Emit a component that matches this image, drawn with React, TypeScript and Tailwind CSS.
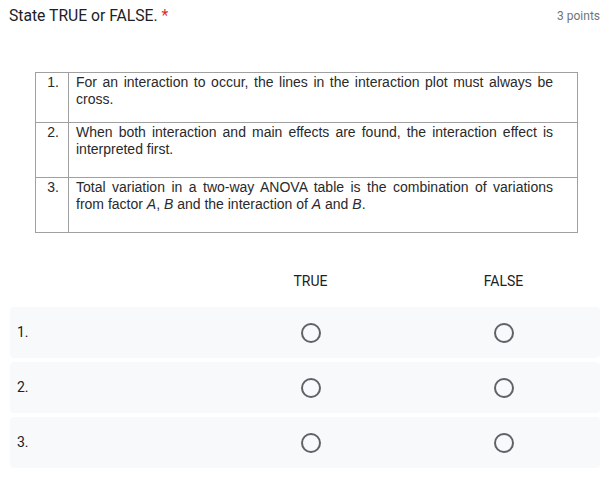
const statements = [
  {
    n: '1.',
    lines: (
      <>For an interaction to occur, the lines in the interaction plot must always be cross.</>
    ),
    h: 'h-[50px]',
  },
  {
    n: '2.',
    lines: (
      <>When both interaction and main effects are found, the interaction effect is interpreted first.</>
    ),
    h: 'h-[55px]',
  },
  {
    n: '3.',
    lines: (
      <>
        Total variation in a two-way ANOVA table is the combination of variations from factor <i>A</i>,{' '}
        <i>B</i> and the interaction of <i>A</i> and <i>B</i>.
      </>
    ),
    h: 'h-[55px]',
  },
];

function Radio() {
  return <div className="w-5 h-5 rounded-full border-2 border-[#5f6368]" />;
}

export default function App() {
  return (
    <div className="w-[612px] h-[485px] bg-white font-['Roboto',sans-serif] text-[#202124]">
      {/* header */}
      <div className="flex items-start justify-between pl-[9px] pr-[12px] pt-[5px]">
        <div className="text-[15.7px] leading-[22px]">
          State TRUE or FALSE. <span className="text-[#d93025]">*</span>
        </div>
        <div className="text-[12px] leading-[22px] text-[#70757a]">3 points</div>
      </div>

      {/* statement image */}
      <div className="pl-[35px] pt-[45px]">
        <table className="w-[543px] border-collapse font-['Liberation_Sans',Arial,sans-serif] text-[14px] leading-[17px] text-[#2a2a2a]">
          <tbody>
            {statements.map((s) => (
              <tr key={s.n} className={s.h}>
                <td className="w-[33px] border border-[#a0a0a0] align-top text-center pt-[1px] pl-[2px]">
                  {s.n}
                </td>
                <td className="border border-[#a0a0a0] align-top pt-[1px] pl-[7px] pr-[24px] text-justify">
                  {s.lines}
                </td>
              </tr>
            ))}
          </tbody>
        </table>
      </div>

      {/* grid */}
      <div className="pl-[10px] pr-[12px] pt-[37px]">
        <div className="grid grid-cols-[204px_193px_193px] h-[22px] items-center text-[14px]">
          <div />
          <div className="text-center">TRUE</div>
          <div className="text-center">FALSE</div>
        </div>
        <div className="mt-[15px] flex flex-col gap-[4px]">
          {['1.', '2.', '3.'].map((n) => (
            <div
              key={n}
              className="grid grid-cols-[204px_193px_193px] h-[51px] items-center rounded-[4px] bg-[#f8f9fa] text-[14px]"
            >
              <div className="pl-[7px]">{n}</div>
              <div className="flex justify-center">
                <Radio />
              </div>
              <div className="flex justify-center">
                <Radio />
              </div>
            </div>
          ))}
        </div>
      </div>
    </div>
  );
}
